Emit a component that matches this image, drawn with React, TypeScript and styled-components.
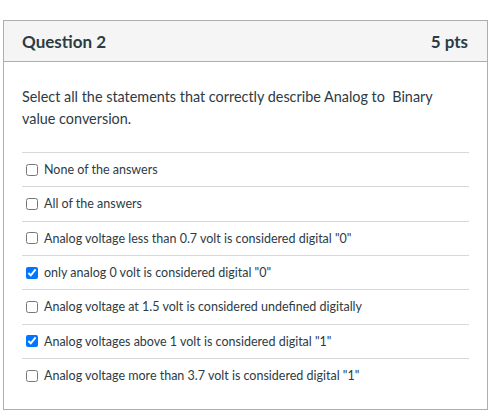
import React from "react";
import styled, { createGlobalStyle } from "styled-components";

const GlobalStyle = createGlobalStyle`
  body {
    margin: 0;
    background: #fff;
    font-family: Lato, "Noto Sans", sans-serif;
    color: #2d3b45;
  }
`;

const answers = [
  { text: "None of the answers", checked: false },
  { text: "All of the answers", checked: false },
  { text: 'Analog voltage less than 0.7 volt is considered digital "0"', checked: false },
  { text: 'only analog 0 volt is considered digital "0"', checked: true },
  { text: "Analog voltage at 1.5 volt is considered undefined digitally", checked: false },
  { text: 'Analog voltages above 1 volt is considered digital "1"', checked: true },
  { text: 'Analog voltage more than 3.7 volt is considered digital "1"', checked: false },
];

const App = () => {
  return (
    <Page>
      <GlobalStyle />
      <SQuestion>
        <div className="header">
          <span className="title">Question 2</span>
          <span className="points">5 pts</span>
        </div>
        <div className="body">
          <p className="text">
            Select all the statements that correctly describe Analog to&nbsp; Binary value conversion.
          </p>
          <ul className="answers">
            {answers.map(({ text, checked }, i) => (
              <li className="answer" key={i}>
                <input type="checkbox" defaultChecked={checked} />
                <label>{text}</label>
              </li>
            ))}
          </ul>
        </div>
      </SQuestion>
    </Page>
  );
};

const Page = styled.div`
  padding: 20px 7px 3px 3px;
`;

const SQuestion = styled.div`
  border: 1px solid #aeaeae;
  width: 483px;
  .header {
    display: flex;
    justify-content: space-between;
    align-items: center;
    height: 40px;
    padding: 0 19px 0 18px;
    background: #f5f5f5;
    border-bottom: 1px solid #aeaeae;
    font-size: 17px;
    font-weight: 700;
  }
  .body {
    padding: 24px 18px 17px 18px;
  }
  .text {
    margin: 0 0 22px 0;
    font-size: 14.4px;
    line-height: 22px;
    padding-right: 30px;
  }
  .answers {
    margin: 0;
    padding: 0;
  }
  .answer {
    box-sizing: border-box;
    list-style: none;
    display: flex;
    align-items: center;
    height: 34.33px;
    border-top: 1px solid #d8d8d8;
    font-size: 12.5px;
  }
  .answer input {
    width: 12px;
    height: 12px;
    margin: 0 6px 0 4px;
  }
`;

export default App;
